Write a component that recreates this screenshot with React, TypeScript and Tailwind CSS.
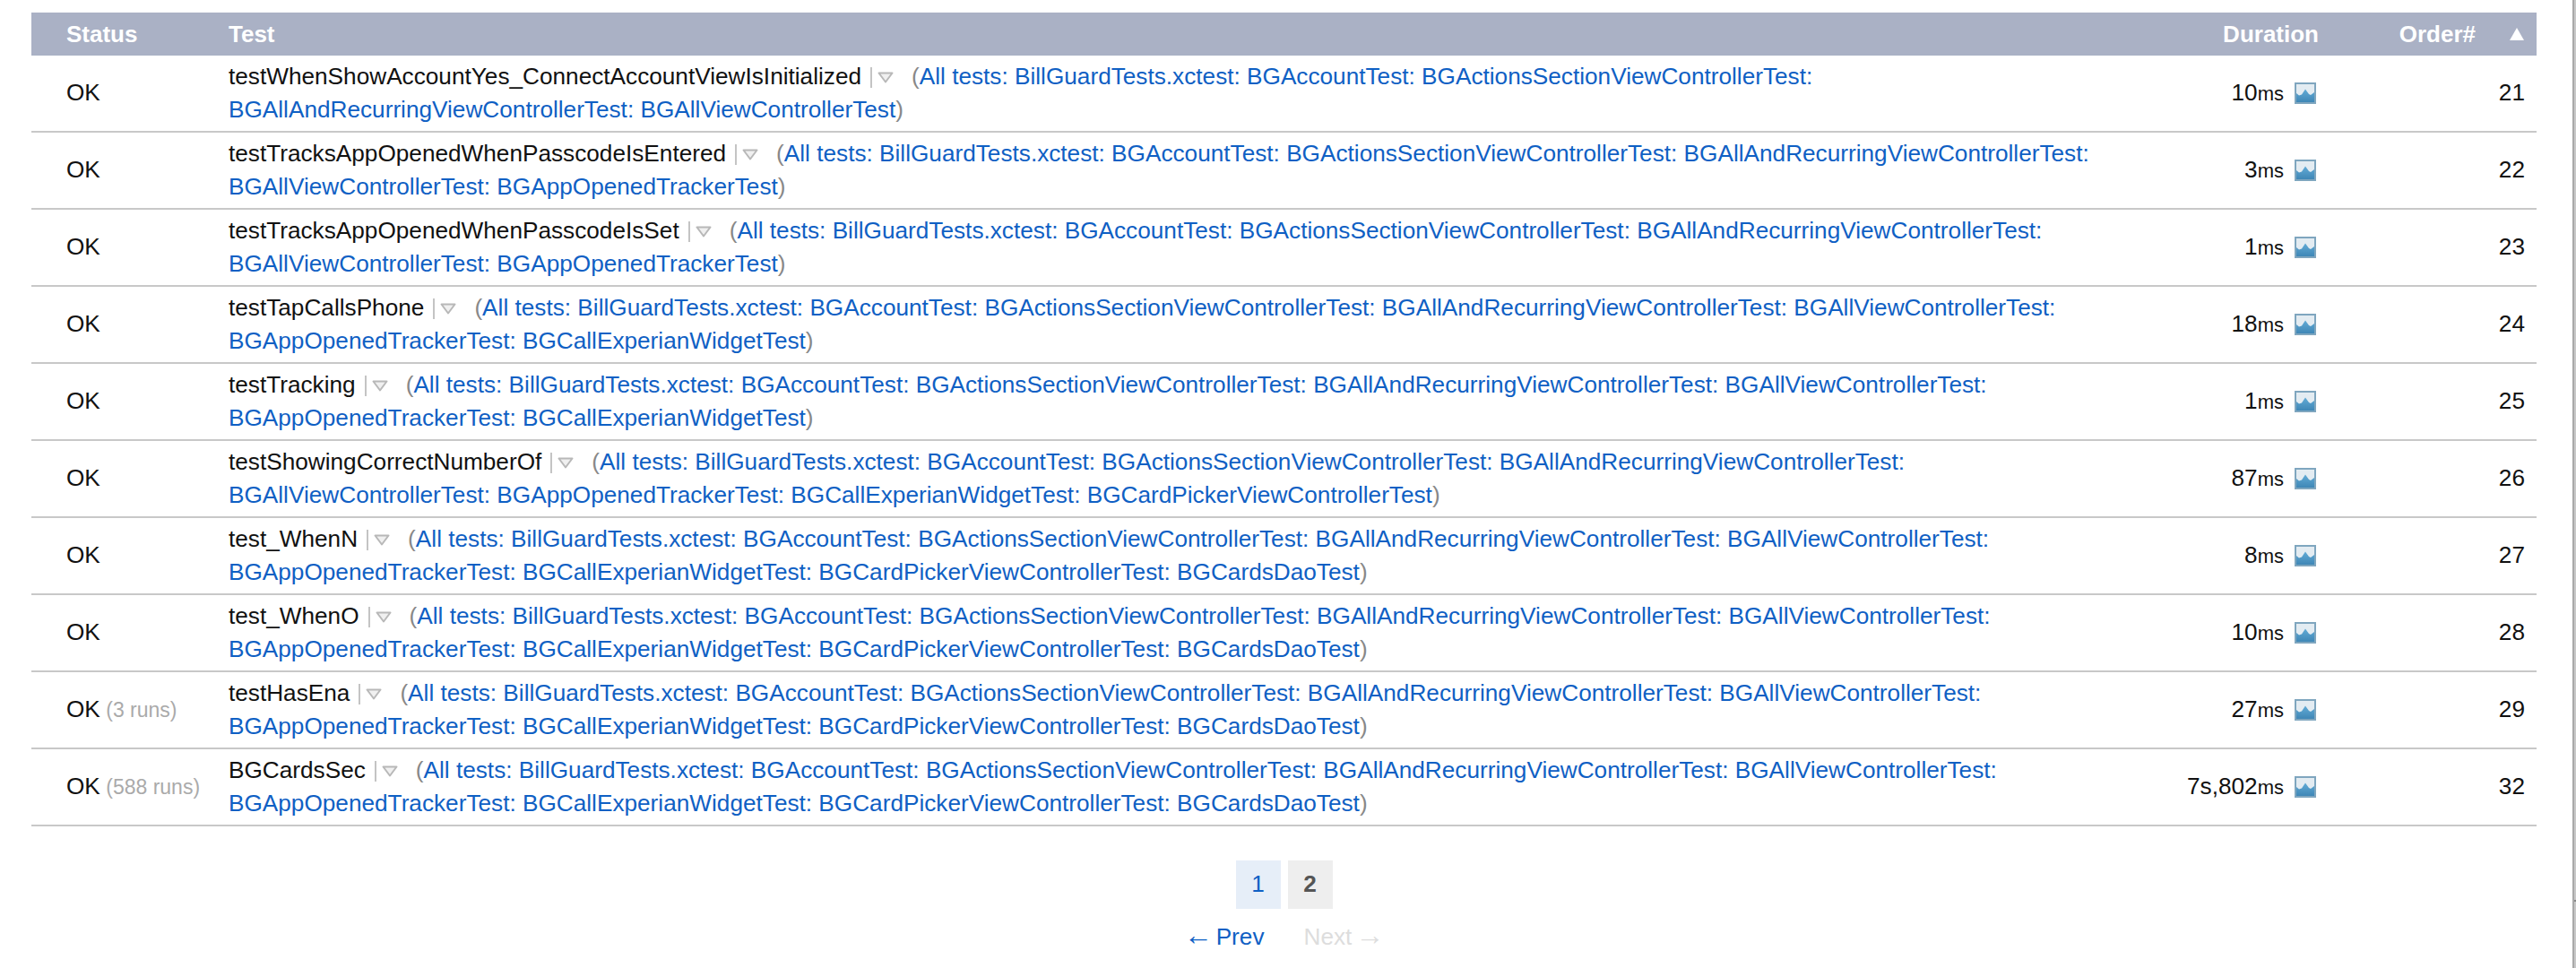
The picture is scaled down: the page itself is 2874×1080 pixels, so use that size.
const rows = [
  { name: "testWhenShowAccountYes_ConnectAccountViewIsInitialized", l1: "All tests: BillGuardTests.xctest: BGAccountTest: BGActionsSectionViewControllerTest:", l2: "BGAllAndRecurringViewControllerTest: BGAllViewControllerTest", d: "10", o: 21 },
  { name: "testTracksAppOpenedWhenPasscodeIsEntered", l1: "All tests: BillGuardTests.xctest: BGAccountTest: BGActionsSectionViewControllerTest: BGAllAndRecurringViewControllerTest:", l2: "BGAllViewControllerTest: BGAppOpenedTrackerTest", d: "3", o: 22 },
  { name: "testTracksAppOpenedWhenPasscodeIsSet", l1: "All tests: BillGuardTests.xctest: BGAccountTest: BGActionsSectionViewControllerTest: BGAllAndRecurringViewControllerTest:", l2: "BGAllViewControllerTest: BGAppOpenedTrackerTest", d: "1", o: 23 },
  { name: "testTapCallsPhone", l1: "All tests: BillGuardTests.xctest: BGAccountTest: BGActionsSectionViewControllerTest: BGAllAndRecurringViewControllerTest: BGAllViewControllerTest:", l2: "BGAppOpenedTrackerTest: BGCallExperianWidgetTest", d: "18", o: 24 },
  { name: "testTracking", l1: "All tests: BillGuardTests.xctest: BGAccountTest: BGActionsSectionViewControllerTest: BGAllAndRecurringViewControllerTest: BGAllViewControllerTest:", l2: "BGAppOpenedTrackerTest: BGCallExperianWidgetTest", d: "1", o: 25 },
  { name: "testShowingCorrectNumberOf", l1: "All tests: BillGuardTests.xctest: BGAccountTest: BGActionsSectionViewControllerTest: BGAllAndRecurringViewControllerTest:", l2: "BGAllViewControllerTest: BGAppOpenedTrackerTest: BGCallExperianWidgetTest: BGCardPickerViewControllerTest", d: "87", o: 26 },
  { name: "test_WhenN", l1: "All tests: BillGuardTests.xctest: BGAccountTest: BGActionsSectionViewControllerTest: BGAllAndRecurringViewControllerTest: BGAllViewControllerTest:", l2: "BGAppOpenedTrackerTest: BGCallExperianWidgetTest: BGCardPickerViewControllerTest: BGCardsDaoTest", d: "8", o: 27 },
  { name: "test_WhenO", l1: "All tests: BillGuardTests.xctest: BGAccountTest: BGActionsSectionViewControllerTest: BGAllAndRecurringViewControllerTest: BGAllViewControllerTest:", l2: "BGAppOpenedTrackerTest: BGCallExperianWidgetTest: BGCardPickerViewControllerTest: BGCardsDaoTest", d: "10", o: 28 },
  { name: "testHasEna", runs: "(3 runs)", l1: "All tests: BillGuardTests.xctest: BGAccountTest: BGActionsSectionViewControllerTest: BGAllAndRecurringViewControllerTest: BGAllViewControllerTest:", l2: "BGAppOpenedTrackerTest: BGCallExperianWidgetTest: BGCardPickerViewControllerTest: BGCardsDaoTest", d: "27", o: 29 },
  { name: "BGCardsSec", runs: "(588 runs)", l1: "All tests: BillGuardTests.xctest: BGAccountTest: BGActionsSectionViewControllerTest: BGAllAndRecurringViewControllerTest: BGAllViewControllerTest:", l2: "BGAppOpenedTrackerTest: BGCallExperianWidgetTest: BGCardPickerViewControllerTest: BGCardsDaoTest", d: "7s,802", o: 32 },
];

function Drop() {
  return (
    <span className="inline-flex items-center ml-[10px] mr-[20px] align-[-4px]">
      <span className="w-[2px] h-[23px] bg-[#c4c4c4]" />
      <svg width="18" height="13" viewBox="0 0 18 13" className="ml-[6px]">
        <path d="M1.5 1.5 H16.5 L9 11.5 Z" fill="#f0f0f0" stroke="#b8b8b8" strokeWidth="2" strokeLinejoin="round" />
      </svg>
    </span>
  );
}

function Pic({ id }: { id: number }) {
  return (
    <svg width="24" height="24" viewBox="0 0 24 24" className="ml-[12px]">
      <defs>
        <linearGradient id={`m${id}`} x1="0" y1="0" x2="0" y2="1">
          <stop offset="0" stopColor="#62abd6" />
          <stop offset="1" stopColor="#3f87b6" />
        </linearGradient>
      </defs>
      <rect x="0" y="0" width="24" height="24" fill="#7fa6bf" />
      <rect x="2" y="2" width="20" height="20" fill="#e3ecf2" />
      <path d="M2 12 L5 14.5 L8 13.5 L12 7.5 L16 13 L18 14 L22 11 V22 H2 Z" fill={`url(#m${id})`} />
    </svg>
  );
}

export default function App() {
  return (
    <div className="flex w-full min-h-[1080px] bg-white font-['Liberation_Sans',Arial,sans-serif] text-[26.2px] text-[#111]">
      <div className="flex-1 pl-[35px] pt-[14px] pr-[40px]">
        <div className="flex items-center h-[48px] bg-[#aab1c5] text-white font-bold text-[26px]">
          <div className="w-[220px] pl-[39px]">Status</div>
          <div className="flex-1">Test</div>
          <div className="text-right">Duration</div>
          <div className="w-[175px] text-right">Order#</div>
          <div className="w-[68px] pr-[14px] flex justify-end">
            <svg width="16" height="14" viewBox="0 0 16 14">
              <path d="M8 0 L16 14 H0 Z" fill="#fff" />
            </svg>
          </div>
        </div>
        {rows.map((r) => (
          <div key={r.o} className="flex items-center h-[86px] border-b-2 border-[#c8c8c8]">
            <div className="w-[220px] pl-[39px] whitespace-nowrap">
              OK{r.runs && <span className="text-[#aaa] text-[23px]"> {r.runs}</span>}
            </div>
            <div className="flex-1 leading-[37px] whitespace-nowrap">
              {r.name}
              <Drop />
              <span className="text-[#888]">(</span>
              <span className="text-[#0f60c4]">{r.l1}</span>
              <br />
              <span className="text-[#0f60c4]">{r.l2}</span>
              <span className="text-[#888]">)</span>
            </div>
            <div className="flex items-center justify-end">
              <span>{r.d}<span className="text-[22px]">ms</span></span>
              <Pic id={r.o} />
            </div>
            <div className="w-[246px] pr-[13px] text-right">{r.o}</div>
          </div>
        ))}
        <div className="flex flex-col items-center mt-[38px]">
          <div className="flex gap-[8px]">
            <div className="w-[50px] h-[54px] flex items-center justify-center bg-[#e6eef8] text-[#0f60c4]">1</div>
            <div className="w-[50px] h-[54px] flex items-center justify-center bg-[#eee] text-[#555] font-bold">2</div>
          </div>
          <div className="flex gap-[44px] mt-[12px] items-center">
            <span className="flex items-center text-[#0f60c4]">
              <span className="text-[32px] leading-none mr-[4px] -translate-y-[3px]">←</span>Prev
            </span>
            <span className="flex items-center text-[#ddd]">
              Next<span className="text-[32px] leading-none ml-[4px] -translate-y-[3px]">→</span>
            </span>
          </div>
        </div>
      </div>
      <div className="w-[4px] bg-[#c8c8c8] border-l-2 border-[#a9a9a9] flex flex-col">
        <div className="h-[1004px]" />
        <div className="h-[2px] bg-[#888]" />
      </div>
    </div>
  );
}
